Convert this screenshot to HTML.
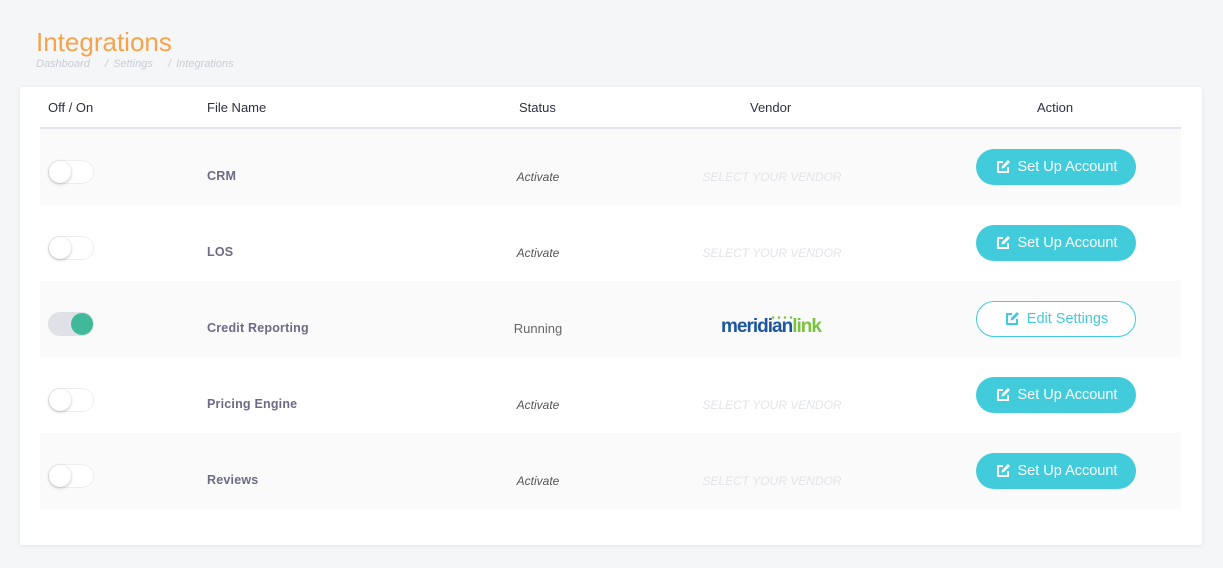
<!DOCTYPE html>
<html><head><style>
body{margin:0;width:1223px;height:568px;background:#f5f6f8;font-family:"Liberation Sans",sans-serif;position:relative;overflow:hidden}
.a{position:absolute}
h1{position:absolute;left:36px;top:27px;margin:0;font-weight:normal;font-size:26px;color:#f5a44b}
.bc{left:36px;top:58px;font-size:11px;font-style:italic;color:#c9ccd4;word-spacing:2px}
.card{left:20px;top:87px;width:1182px;height:458px;background:#fff;box-shadow:0 1px 4px rgba(0,0,0,.08);border-radius:2px}
.th{top:100px;font-size:13px;color:#2f3044}
.line{left:40px;top:127px;width:1141px;height:2px;background:#e3e5ea}
.row{left:40px;width:1141px;height:76px}
.g{background:#fafafa}
.tog{left:48px;width:46px;height:24px;border-radius:12px;border:1px solid #eceef1;box-sizing:border-box;background:#fff}
.tog::after{content:"";position:absolute;left:0;top:0;width:22px;height:22px;border-radius:50%;background:#fff;box-shadow:0 1px 3px rgba(0,0,0,.25)}
.tog.on{background:#dfe1e6;border-color:#dfe1e6}
.tog.on::after{left:22px;background:#3fb99a;box-shadow:none}
.fn{left:207px;font-size:12.5px;color:#6b6b85;font-weight:bold;letter-spacing:.2px}
.st{width:120px;left:478px;text-align:center;font-size:12px;font-style:italic;color:#555}
.vd{width:200px;left:672px;text-align:center;font-size:12px;font-style:italic;color:#e2e4e8}
.btn{left:976px;width:160px;height:36px;border-radius:18px;background:#41cbdb;color:#fff;font-size:14.5px;box-sizing:border-box;display:flex;align-items:center;justify-content:center;gap:7px}
.btn.o{background:#fff;border:1px solid #41cbdb;color:#41cbdb}
</style></head><body>
<h1>Integrations</h1>
<div class="a bc">Dashboard &nbsp; / Settings &nbsp; / Integrations</div>
<div class="a card"></div>
<div class="a th" style="left:48px">Off / On</div>
<div class="a th" style="left:207px">File Name</div>
<div class="a th" style="left:519px">Status</div>
<div class="a th" style="left:750px">Vendor</div>
<div class="a th" style="left:1037px">Action</div>
<div class="a line"></div>

<div class="a row g" style="top:129px"></div>
<div class="a row" style="top:205px"></div>
<div class="a row g" style="top:281px"></div>
<div class="a row" style="top:357px"></div>
<div class="a row g" style="top:433px"></div>

<div class="a tog" style="top:160px"></div>
<div class="a tog" style="top:236px"></div>
<div class="a tog on" style="top:312px"></div>
<div class="a tog" style="top:388px"></div>
<div class="a tog" style="top:464px"></div>

<div class="a fn" style="top:169px">CRM</div>
<div class="a fn" style="top:245px">LOS</div>
<div class="a fn" style="top:321px">Credit Reporting</div>
<div class="a fn" style="top:397px">Pricing Engine</div>
<div class="a fn" style="top:473px">Reviews</div>

<div class="a st" style="top:170px">Activate</div>
<div class="a st" style="top:246px">Activate</div>
<div class="a st" style="top:321px;font-style:normal;font-size:13px;color:#666">Running</div>
<div class="a st" style="top:398px">Activate</div>
<div class="a st" style="top:474px">Activate</div>

<div class="a vd" style="top:170px">SELECT YOUR VENDOR</div>
<div class="a vd" style="top:246px">SELECT YOUR VENDOR</div>
<div class="a" style="left:721px;top:316px;font-size:19px;font-weight:bold;letter-spacing:-1px"><span style="color:#1d56a0">meridian</span><span style="color:#7cc142">link</span></div>
<div class="a" style="left:770px;top:316px;width:24px;height:3px;background:radial-gradient(circle,#7cc142 1px,transparent 1.5px) 0 0/6px 3px"></div>
<div class="a vd" style="top:398px">SELECT YOUR VENDOR</div>
<div class="a vd" style="top:474px">SELECT YOUR VENDOR</div>

<svg width="0" height="0" style="position:absolute"><defs><symbol id="ed" viewBox="0 0 16 16"><path d="M8 3H3v10h10V8" fill="none" stroke="currentColor" stroke-width="2"/><path d="M6.5 9.5l.5-2.5 6-6 2 2-6 6z" fill="currentColor"/></symbol></defs></svg>
<div class="a btn" style="top:149px"><svg width="16" height="16"><use href="#ed"/></svg>Set Up Account</div>
<div class="a btn" style="top:225px"><svg width="16" height="16"><use href="#ed"/></svg>Set Up Account</div>
<div class="a btn o" style="top:301px"><svg width="16" height="16"><use href="#ed"/></svg>Edit Settings</div>
<div class="a btn" style="top:377px"><svg width="16" height="16"><use href="#ed"/></svg>Set Up Account</div>
<div class="a btn" style="top:453px"><svg width="16" height="16"><use href="#ed"/></svg>Set Up Account</div>
</body></html>
